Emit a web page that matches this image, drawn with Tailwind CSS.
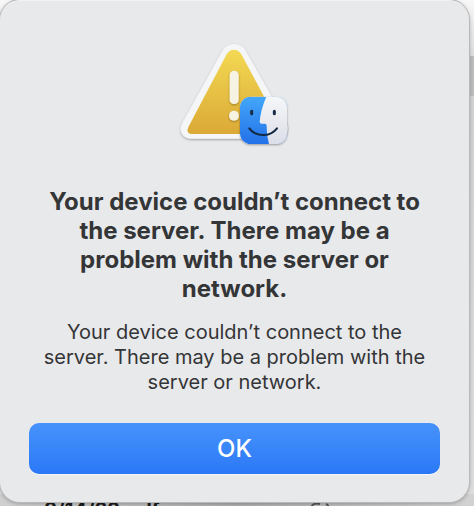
<!DOCTYPE html>
<html lang="en">

<head>
    <meta charset="UTF-8">
    <meta name="viewport" content="width=device-width, initial-scale=1.0">
    <title>Connection problem</title>
    <script src="https://cdn.jsdelivr.net/npm/@tailwindcss/browser@4"></script>
</head>

<body class="relative min-h-screen overflow-hidden bg-[#d6d6d6] font-[Inter,'Liberation_Sans',sans-serif] text-[#343537]">

    <!-- File window behind the alert -->
    <div class="absolute inset-0 flex flex-col overflow-hidden" aria-hidden="true">
        <div class="h-14 shrink-0 bg-gradient-to-b from-[#f8f8f8] to-[#dedede]"></div>
        <div class="h-10 shrink-0 bg-[#bdbdbd]"></div>
        <div class="grow bg-gradient-to-b from-[#d2d2d2] to-[#dedede]"></div>
        <div class="flex h-3 shrink-0 items-start bg-gradient-to-r from-[#d0d0d0] via-[#acacac] to-[#d2d2d2] pl-11">
            <span class="mt-1.5 w-[265px] text-xl leading-none font-bold text-[#1b1b1b]">8/14/22.pdf</span>
            <svg class="mt-1.5 h-5 w-6" viewBox="0 0 24 20" fill="none" stroke="#555" stroke-width="2">
                <path d="M3 8C2 4 6 3 11 4M17 4c3 1 3 4 1 6" />
            </svg>
        </div>
    </div>

    <main role="alertdialog" aria-labelledby="title" aria-describedby="message"
        class="relative mr-[5px] flex flex-col items-center rounded-[20px] border-t border-[#f1f2f3] bg-[#e8e9eb] px-[29px] pt-[34px] pb-7 text-center shadow-[0_0_0_1px_#b9b9b9,0_1px_4px_#00000055]">
        <svg class="h-[120px] w-[130px]" viewBox="0 0 390 360" aria-hidden="true">
            <defs>
                <linearGradient id="yellow" x1="0" y1="0" x2="0" y2="1">
                    <stop offset="0" stop-color="#f3d953" />
                    <stop offset="1" stop-color="#dba936" />
                </linearGradient>
                <linearGradient id="blue" x1="0" y1="0" x2="0" y2="1">
                    <stop offset="0" stop-color="#43a7fa" />
                    <stop offset="1" stop-color="#2471e8" />
                </linearGradient>
                <linearGradient id="white" x1="0" y1="0" x2="0" y2="1">
                    <stop offset="0" stop-color="#f5f6f8" />
                    <stop offset="1" stop-color="#dcdfe8" />
                </linearGradient>
                <filter id="shadow" x="-20%" y="-20%" width="140%" height="140%">
                    <feDropShadow dx="0" dy="3" stdDeviation="3" flood-color="#000" flood-opacity=".35" />
                </filter>
                <clipPath id="face">
                    <rect x="210" y="185" width="141" height="142" rx="32" />
                </clipPath>
            </defs>
            <path filter="url(#shadow)" fill="#f5f6f7"
                d="M157 47Q169 27 192 27Q215 27 227 47L349 262Q358 280 350 295Q342 311 321 311H63Q43 311 35 295Q28 281 37 264Z" />
            <path fill="url(#yellow)"
                d="M170 58Q178 44 192 44Q206 44 214 58L328 270Q342 297 316 297H69Q44 297 57 272Z" />
            <g fill="#f7f3e3" filter="url(#shadow)">
                <rect x="179" y="107" width="27" height="100" rx="13" />
                <circle cx="192" cy="242" r="15" />
            </g>
            <rect filter="url(#shadow)" x="210" y="185" width="141" height="142" rx="32" fill="#e9ebef" />
            <g clip-path="url(#face)">
                <path fill="url(#blue)" d="M210 185H351V327H210Z" />
                <path fill="url(#white)"
                    d="M289 185Q272 224 269 260Q269 266 275 266H285Q290 266 290 273Q289 300 297 327H351V185Z" />
            </g>
            <path d="M245 229v7M313 229v7" stroke="#172c45" stroke-width="9" stroke-linecap="round" />
            <path d="M238 280Q251 299 279 300Q306 300 321 280" fill="none" stroke="#142a43" stroke-width="6"
                stroke-linecap="round" />
        </svg>

        <h1 id="title" class="mt-8 text-2xl leading-[29px] font-bold">
            Your device couldn’t connect to<br>
            the server. There may be a<br>
            problem with the server or<br>
            network.
        </h1>
        <p id="message" class="mt-[17px] text-xl leading-[25px]">
            Your device couldn’t connect to the<br>
            server. There may be a problem with the<br>
            server or network.
        </p>
        <button type="button"
            class="mt-7 h-[51px] w-full rounded-[10px] bg-gradient-to-b from-[#4692fb] to-[#2b78f7] text-2xl font-medium text-white shadow-[0_1px_1px_#ffffffaa]">
            OK
        </button>
    </main>
</body>

</html>
